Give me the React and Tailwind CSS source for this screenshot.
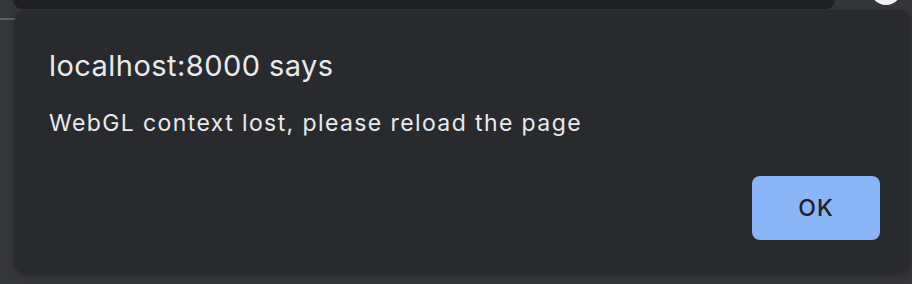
import React from 'react';

const App = () => {
  return (
    <div className="w-[912px] h-[284px] overflow-hidden bg-[#35363a] font-['Inter','Liberation_Sans',sans-serif]">
      {/* browser chrome peeking from behind the dialog */}
      <div className="flex h-[10px] overflow-hidden">
        <div className="ml-[13px] w-[822px] h-[9px] bg-[#202124] rounded-b-[14px]" />
        <div className="ml-[35px] w-[32px] h-[32px] -mt-[27px] bg-[#f1f3f4] rounded-full shrink-0" />
      </div>

      <div className="flex">
        <div className="w-[15px] shrink-0 pt-[8px]">
          <div className="h-[2px] w-[16px] bg-[#5f6368]" />
        </div>

        <div className="w-[895px] h-[262px] bg-[#292a2d] rounded-[10px] shadow-[0_2px_6px_rgba(0,0,0,0.35)] pl-[34px] pr-[30px] pt-[39px] flex flex-col">
          <h1 className="text-[29px] leading-[34px] tracking-[0.45px] text-[#e8eaed] font-normal">
            localhost:8000 says
          </h1>
          <p className="mt-[26px] text-[23px] leading-[28px] tracking-[1.4px] text-[#e8eaed]">
            WebGL context lost, please reload the page
          </p>
          <div className="mt-[39px] flex justify-end">
            <button className="w-[128px] h-[64px] rounded-[8px] bg-[#8ab4f8] text-[#202124] text-[23px] tracking-[1px] font-medium">
              OK
            </button>
          </div>
        </div>
      </div>
    </div>
  );
};

export default App;
